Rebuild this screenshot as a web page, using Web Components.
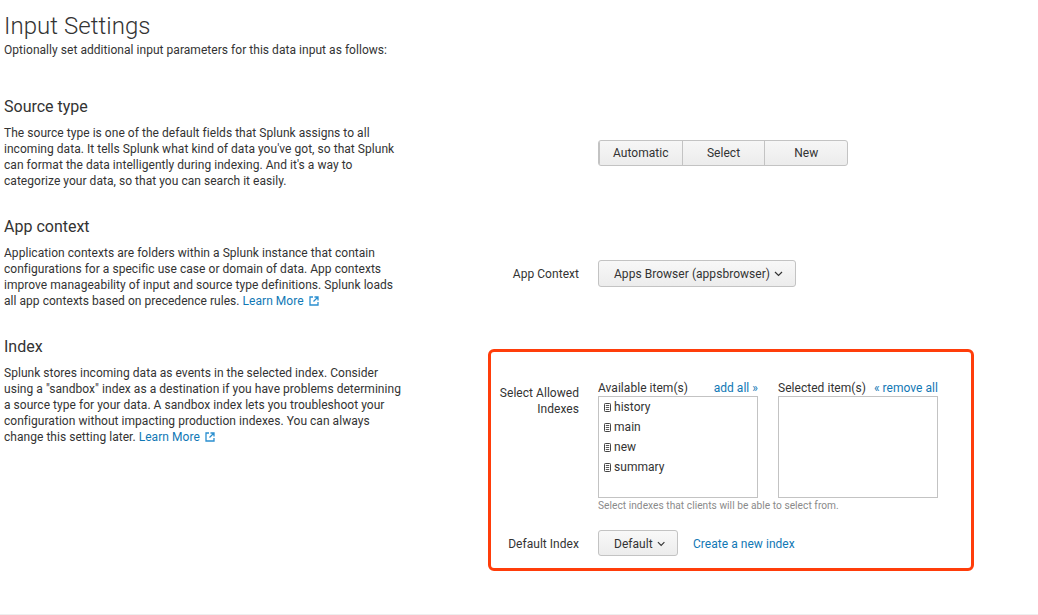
<!DOCTYPE html>
<html><head><meta charset="utf-8"><style>
html,body{margin:0;padding:0;background:#fff;height:615px;overflow:hidden}
body{font:12px/16px Roboto,"Liberation Sans",sans-serif;color:#333;letter-spacing:.04px}
</style></head><body>
<template id="t-page"><style>
:host{display:flex;flex-direction:column;height:615px;box-sizing:border-box;border-bottom:1px solid #eee;padding:11px 0 0 4px}
h1{font:300 24px/30px Roboto,sans-serif;letter-spacing:.05px;margin:0;color:#333}
p{margin:1px 0 0;line-height:16px}
.body{margin-top:39px;display:flex;flex-direction:column}
</style><h1>Input Settings</h1><p>Optionally set additional input parameters for this data input as follows:</p><div class="body"><slot></slot></div></template>

<template id="t-section"><style>
:host{display:grid;grid-template-columns:484px 1fr;height:120px}
h2{font:400 16px/20px Roboto,sans-serif;letter-spacing:0;margin:0 0 8px;color:#333}
.txt{font-size:12px;line-height:16px}
::slotted(a){color:#1178b5;text-decoration:none}
</style><div><h2 id="h"></h2><div class="txt"><slot></slot></div></div><div><slot name="control"></slot></div></template>

<template id="t-field"><style>
:host{display:grid;grid-template-columns:91px 1fr;column-gap:19px;align-items:center}
.l{text-align:right}
</style><div class="l"><slot name="label"></slot></div><div style="display:flex;align-items:center"><slot></slot></div></template>

<template id="t-seg"><style>
:host{display:inline-flex;width:250px;height:26px;box-sizing:border-box;border:1px solid #c3c3c3;border-radius:3px;background:linear-gradient(#f6f6f6,#ececec);overflow:hidden}
span{box-sizing:border-box;width:83px;text-align:center;line-height:24px;border-left:1px solid #c3c3c3;color:#333}
span:first-child{border-left:0;width:82px;background:#f8f8f8;padding-right:1px}
</style><span>Automatic</span><span>Select</span><span>New</span></template>

<template id="t-drop"><style>
:host{display:inline-flex;align-items:center;gap:4px;box-sizing:border-box;height:27px;padding:0 12px 0 15px;border:1px solid #c3c3c3;border-radius:3px;background:linear-gradient(#f8f8f8,#ececec);color:#333;white-space:nowrap}
svg{width:9px;height:6px}
</style><slot></slot><svg viewBox="0 0 9 6"><path d="M1 1l3.500 3.500L8 1" fill="none" stroke="#333" stroke-width="1.200"/></svg></template>

<template id="t-list"><style>
:host{display:block;width:160px}
.h{display:flex;justify-content:space-between;height:16px;line-height:17px;white-space:nowrap}
.h ::slotted(a){color:#1178b5;text-decoration:none}
.b{box-sizing:border-box;height:102px;border:1px solid #c3c3c3;padding:0 4px}
</style><div class="h"><slot name="title"></slot><slot name="act"></slot></div><div class="b"><slot></slot></div></template>

<template id="t-item"><style>
:host{display:flex;align-items:center;height:20px;gap:3px;color:#333}
svg{width:7px;height:9px;flex:none;margin-left:1px}
</style><svg viewBox="0 0 7 9"><rect x=".5" y=".5" width="6" height="8" rx=".8" fill="none" stroke="#444"/><path d="M1.800 2.500h3.400M1.800 4.500h3.400M1.800 6.500h3.400" stroke="#444" stroke-width=".9"/></svg><slot></slot></template>

<template id="t-box"><style>
:host{display:block;box-sizing:border-box;width:486px;height:222px;border:3px solid #ff3d0a;border-radius:6px;padding:28px 0 0 5px}
.row{display:grid;grid-template-columns:83px 1fr;column-gap:19px}
.l{text-align:right}
.lists{display:flex;gap:20px}
.help{font-size:10.170px;line-height:14px;color:#8a8a8a;padding-top:1px}
.def{margin-top:17px;align-items:center}
.def .l{padding-top:1px}
.def>div:last-child{display:flex;align-items:center;gap:15px}
::slotted(a){color:#1178b5;text-decoration:none;padding-top:1px}
</style><div class="row"><div class="l" style="padding-top:5px"><slot name="label1"></slot></div><div><div class="lists"><slot name="lists"></slot></div><div class="help">Select indexes that clients will be able to select from.</div></div></div>
<div class="row def"><div class="l"><slot name="label2"></slot></div><div><slot name="drop"></slot><slot name="link"></slot></div></div></template>

<script>
const def=(n,id,init)=>customElements.define(n,class extends HTMLElement{constructor(){super();const s=this.attachShadow({mode:'open'});s.appendChild(document.getElementById(id).content.cloneNode(true));}connectedCallback(){init&&init(this,this.shadowRoot)}});
def('wizard-page','t-page');
def('settings-section','t-section',(e,s)=>{s.getElementById('h').textContent=e.getAttribute('heading')});
def('form-field','t-field');def('seg-control','t-seg');def('drop-button','t-drop');def('item-list','t-list');def('list-item','t-item');def('index-box','t-box');
</script>

<wizard-page>
<settings-section heading="Source type">The source type is one of the default fields that Splunk assigns to all<br>incoming data. It tells Splunk what kind of data you've got, so that Splunk<br>can format the data intelligently during indexing. And it's a way to<br>categorize your data, so that you can search it easily.
<form-field slot="control" style="margin-top:43px"><seg-control></seg-control></form-field></settings-section>
<settings-section heading="App context">Application contexts are folders within a Splunk instance that contain<br>configurations for a specific use case or domain of data. App contexts<br>improve manageability of input and source type definitions. Splunk loads<br>all app contexts based on precedence rules. <a>Learn More <svg width="10" height="10" viewBox="0 0 10 10" style="margin-left:2px;vertical-align:-1px"><path d="M4 1H1v8h8V6M5.500 1H9v3.500M9 1L4.500 5.500" fill="none" stroke="#2a8fd0" stroke-width="1.300"/></svg></a>
<form-field slot="control" style="margin-top:43px"><span slot="label">App Context</span><drop-button>Apps Browser (appsbrowser)</drop-button></form-field></settings-section>
<settings-section heading="Index">Splunk stores incoming data as events in the selected index. Consider<br>using a "sandbox" index as a destination if you have problems determining<br>a source type for your data. A sandbox index lets you troubleshoot your<br>configuration without impacting production indexes. You can always<br>change this setting later. <a>Learn More <svg width="10" height="10" viewBox="0 0 10 10" style="margin-left:2px;vertical-align:-1px"><path d="M4 1H1v8h8V6M5.500 1H9v3.500M9 1L4.500 5.500" fill="none" stroke="#2a8fd0" stroke-width="1.300"/></svg></a>
<index-box slot="control" style="margin-top:12px"><span slot="label1">Select Allowed Indexes</span>
<item-list slot="lists"><span slot="title">Available item(s)</span><a slot="act">add all »</a><list-item>history</list-item><list-item>main</list-item><list-item>new</list-item><list-item>summary</list-item></item-list>
<item-list slot="lists"><span slot="title">Selected item(s)</span><a slot="act">« remove all</a></item-list>
<span slot="label2">Default Index</span><drop-button slot="drop" style="height:26px;width:80px;padding-top:1px">Default</drop-button><a slot="link">Create a new index</a></index-box></settings-section>
</wizard-page>
</body></html>
